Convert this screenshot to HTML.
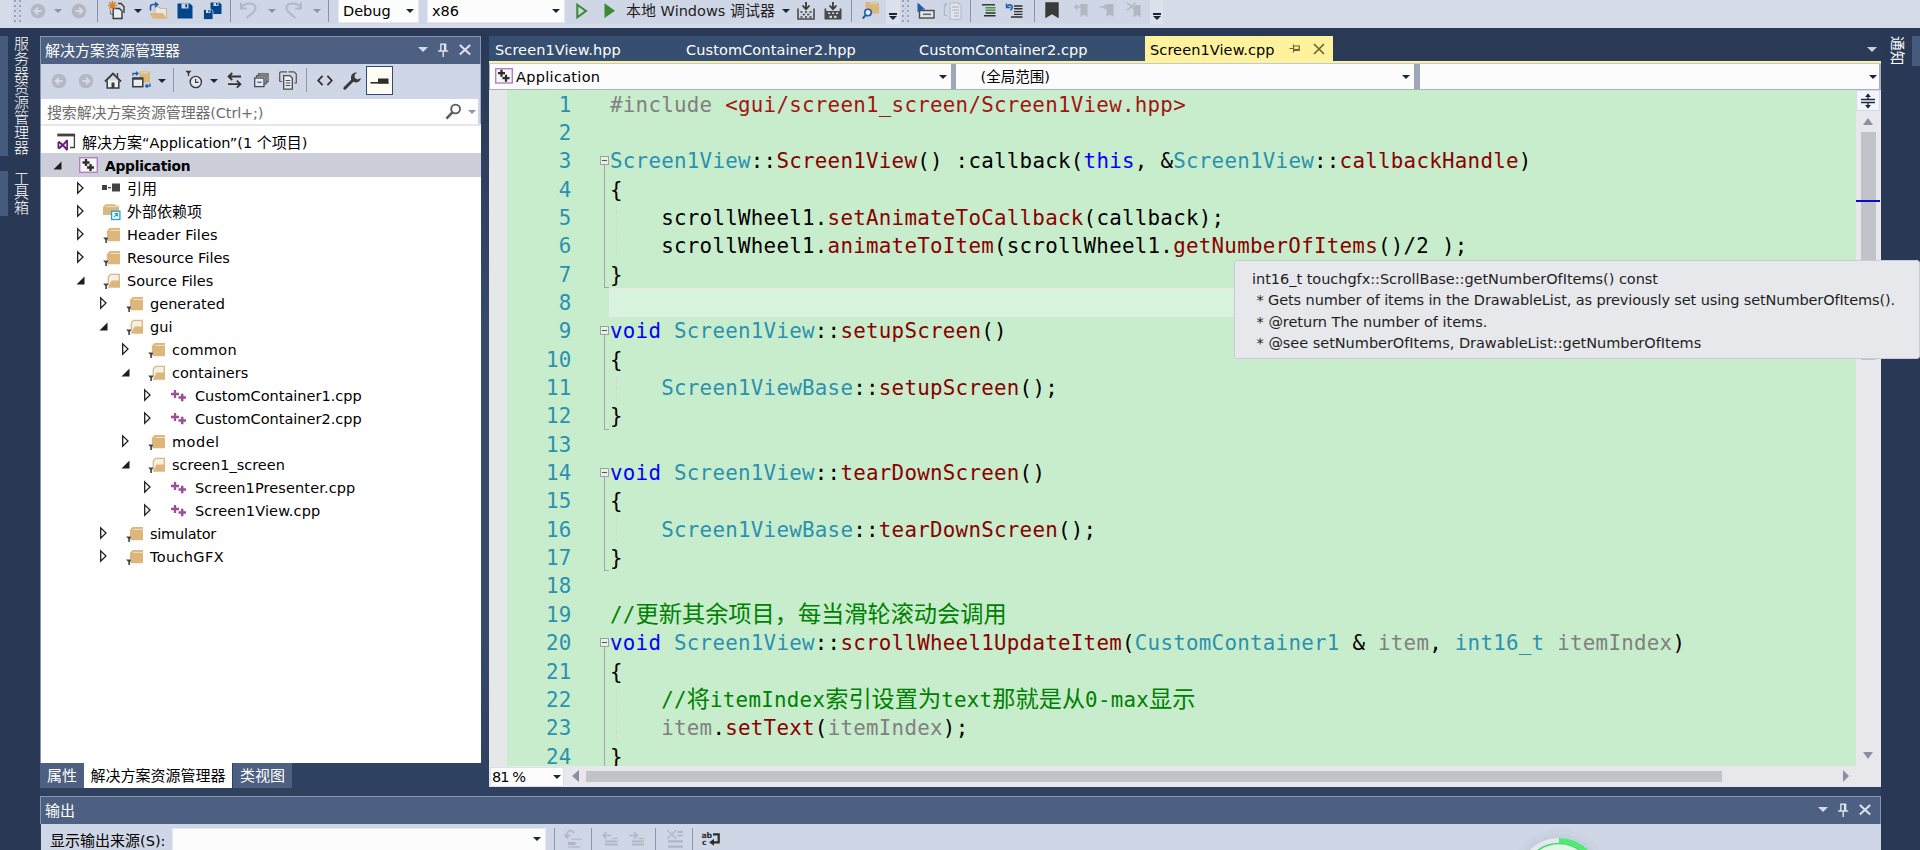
<!DOCTYPE html>
<html lang="zh-CN">
<head>
<meta charset="utf-8">
<title>Application - Microsoft Visual Studio</title>
<style>
html,body{margin:0;padding:0;}
body{width:1920px;height:850px;overflow:hidden;background:#293955;position:relative;
  font-family:"DejaVu Sans","Liberation Sans","Noto Sans CJK SC",sans-serif;font-size:14.5px;color:#000;}
.abs{position:absolute;}
div,span{box-sizing:border-box;}
svg{position:absolute;overflow:visible;}
/* ---------- top toolbar ---------- */
#topbar{left:0;top:0;width:1920px;height:28px;background:#d6dbe9;}
.grip{width:7px;height:22px;top:-0.3px;background-image:radial-gradient(circle at 1px 1px,#6b7690 0.45px,transparent 1px),radial-gradient(circle at 3.5px 3.5px,#a3abc0 0.45px,transparent 1px);background-size:5px 5px;}
.vsep{width:1px;background:#8a93a6;top:0;height:21.500px;}
.combo{background:#fcfcfc;border:1px solid #e5e9f2;height:24px;top:-1px;line-height:22px;padding-left:4px;}
.dd{width:0;height:0;border-left:4px solid transparent;border-right:4px solid transparent;border-top:4px solid #1b2438;}
.dd.g{border-top-color:#8d93a3;}
.dd.s{border-left-width:4px;border-right-width:4px;border-top-width:4.5px;}
/* ---------- side strips ---------- */
.sidebar{background:#465a7d;width:8px;left:0;}
.vtext{color:#fff;font-weight:300;font-size:15px;line-height:14.8px;width:15px;word-break:break-all;text-align:center;}
/* ---------- tool windows ---------- */
.twtitle{background:#4d6082;color:#fff;font-size:15px;line-height:29px;padding-left:4px;border:1px solid #8794b4;border-bottom:none;}
.twbar{background:#cfd6e5;}
/* ---------- tree ---------- */
#tree{left:41px;top:126px;width:440px;height:637px;background:#fff;}
.row{position:absolute;left:0;width:440px;height:23px;line-height:23px;white-space:nowrap;}
.row > span{position:absolute;top:2px;}
.row.sel{background:#ccceda;height:24px;}
.exp{position:absolute;width:0;height:0;}
/* ---------- editor ---------- */
#editor{left:489px;top:90px;width:1392px;height:676px;background:#c7edcc;overflow:hidden;}
.code{font-family:"DejaVu Sans Mono","Liberation Mono","Noto Sans CJK SC",monospace;font-size:20.8px;letter-spacing:0.278px;white-space:pre;}
.ln,.cl{position:absolute;height:28.35px;line-height:28.35px;margin-top:0.5px;}
.ln{left:0;width:82.5px;text-align:right;color:#2b91af;}
.cl{left:121px;}
.k{color:#0000ff}.t{color:#2b91af}.f{color:#880000}.s{color:#a31515}.p{color:#808080}.c{color:#008000}
.cj{line-height:0;font-size:23.2px;letter-spacing:0;font-family:"Noto Sans CJK SC",sans-serif;}

/* ---------- doc tabs / navbar ---------- */
.dtab{position:absolute;top:37px;height:25px;line-height:27px;letter-spacing:0.1px;color:#fff;white-space:nowrap;}
#navbar{left:489px;top:63px;width:1392px;height:27px;background:#a7afc1;border-top:1px solid #c0c8d8;}
.nav{position:absolute;top:0;height:24.500px;background:#fcfcfc;line-height:26px;white-space:nowrap;}
/* ---------- scrollbars ---------- */
.sb{background:#e8e8ec;}
.thumb{background:#c2c3c9;}
.tri{width:0;height:0;}
/* ---------- tooltip ---------- */
#tip{letter-spacing:-0.03px;left:1234px;top:260px;width:686px;height:99px;background:#e7e8ec;border:1px solid #c9cbd6;border-radius:3px;
 line-height:21.4px;color:#1e1e1e;padding:8px 0 0 17px;white-space:pre;}
/* ---------- bottom tabs ---------- */
.btab{position:absolute;top:763px;height:25px;line-height:26.500px;font-size:15px;color:#fff;background:#4d6082;text-align:center;white-space:nowrap;}
.btab.on{background:#fff;color:#000;}
.z{font-size:15px;}
</style>
</head>
<body>
<!--TOPBAR-->
<!-- main toolbar -->
<div id="topbar" class="abs">
<div class="abs" style="left:12px;top:0;width:874px;height:24px;background:#cfd6e5"></div>
<div class="abs" style="left:886px;top:0;width:14px;height:24px;background:#dce1ed"></div>
<div class="abs" style="left:900px;top:0;width:250px;height:24px;background:#cfd6e5"></div>
<div class="abs" style="left:1150px;top:0;width:13px;height:24px;background:#dce1ed"></div>
<div class="abs grip" style="left:14px"></div>
<svg style="left:30px;top:3px" width="16" height="16" viewBox="0 0 16 16"><circle cx="8" cy="8" r="7.3" fill="#b3b8c5"/><path d="M11.5 8H5M8 4.6L4.6 8L8 11.4" fill="none" stroke="#d4d9e5" stroke-width="1.8"/></svg>
<div class="abs dd g" style="left:54px;top:9px"></div>
<svg style="left:71px;top:3px" width="16" height="16" viewBox="0 0 16 16"><circle cx="8" cy="8" r="7.3" fill="#b3b8c5"/><path d="M4.5 8H11M8 4.6L11.4 8L8 11.4" fill="none" stroke="#d4d9e5" stroke-width="1.8"/></svg>
<div class="abs vsep" style="left:97px"></div>
<!-- new project -->
<svg style="left:108px;top:1px" width="18" height="19" viewBox="0 0 18 19"><path d="M10 2.5h3l3 3v6.5" fill="none" stroke="#3a3a3a" stroke-width="1.4"/><path d="M5 13.5H3.5Q2.5 13.5 2.5 12.5V9.5" fill="none" stroke="#3a3a3a" stroke-width="1.2" stroke-dasharray="1.5 1"/><path d="M5.2 7.5h6.2l2.6 2.6v7.4H5.2z" fill="#e8ecf4" stroke="#3a3a3a" stroke-width="1.4"/><path d="M4.5 0v9M0 4.5h9M1.3 1.3l6.4 6.4M7.7 1.3L1.3 7.7" stroke="#d9822b" stroke-width="1.5"/></svg>
<div class="abs dd" style="left:134px;top:9px"></div>
<!-- open -->
<svg style="left:148px;top:2px" width="20" height="18" viewBox="0 0 20 18"><path d="M7 5h4l1.5 1.5H18.5V16H7z" fill="#e4e8f1" stroke="#dcb67a" stroke-width="1.2"/><path d="M1.5 11H15l3.5 5.5H4.5z" fill="#dcb67a"/><path d="M2.5 8.5V5Q2.5 2.5 5 2.5H9.5M7 0.5l2.6 2L7 4.8" fill="none" stroke="#1c5fae" stroke-width="1.6"/></svg>
<!-- save -->
<svg style="left:177px;top:3px" width="16" height="16" viewBox="0 0 16 16"><path d="M0.5 0.5h12.5l2.5 2.5v12.5h-15z" fill="#00468c"/><rect x="4.5" y="0.5" width="7" height="5" fill="#cfd6e5"/><rect x="8.3" y="1.3" width="1.8" height="3" fill="#00468c"/></svg>
<!-- save all -->
<svg style="left:203px;top:2px" width="19" height="18" viewBox="0 0 19 18"><path d="M7.5 0.5h9l2 2v9.5h-11z" fill="#00468c"/><rect x="10.5" y="0.5" width="5" height="3.5" fill="#cfd6e5"/><rect x="13" y="1" width="1.4" height="2.2" fill="#00468c"/><path d="M0.5 7.5h8l1.5 1.5v8.500h-9.5z" fill="#00468c" stroke="#cfd6e5" stroke-width="0.8"/><rect x="3" y="7.8" width="4.5" height="3.2" fill="#cfd6e5"/><rect x="5.2" y="8.200" width="1.300" height="2" fill="#00468c"/></svg>
<div class="abs vsep" style="left:230px"></div>
<!-- undo / redo -->
<svg style="left:240px;top:1px" width="17" height="18" viewBox="0 0 17 18"><path d="M1 6.500C6 0.500 15.500 1.500 15.500 7C15.500 11 9 14.500 6.500 17" fill="none" stroke="#b2b7c4" stroke-width="2"/><path d="M1 1.500V7.500H7" fill="none" stroke="#b2b7c4" stroke-width="2"/></svg>
<div class="abs dd g" style="left:268px;top:9px"></div>
<svg style="left:285px;top:1px" width="17" height="18" viewBox="0 0 17 18"><path d="M16 6.500C11 0.500 1.500 1.500 1.500 7C1.500 11 8 14.500 10.500 17" fill="none" stroke="#b2b7c4" stroke-width="2"/><path d="M16 1.500V7.500H10" fill="none" stroke="#b2b7c4" stroke-width="2"/></svg>
<div class="abs dd g" style="left:313px;top:9px"></div>
<div class="abs vsep" style="left:328px"></div>
<!-- combos -->
<div class="abs combo" style="left:338px;width:81px">Debug</div>
<div class="abs dd s" style="left:405.500px;top:9px"></div>
<div class="abs combo" style="left:427px;width:138px">x86</div>
<div class="abs dd s" style="left:551.500px;top:9px"></div>
<!-- start buttons -->
<svg style="left:576px;top:3px" width="12" height="16" viewBox="0 0 12 16"><path d="M1.300 1.800L10 8L1.300 14.200z" fill="none" stroke="#388a34" stroke-width="2" stroke-linejoin="miter"/></svg>
<svg style="left:604px;top:3px" width="12" height="16" viewBox="0 0 12 16"><path d="M0.500 0.300L11 7.700L0.500 15z" fill="#388a34"/></svg>
<div class="abs" style="left:626px;top:1px;height:22px;line-height:21px;white-space:nowrap;color:#1e1e1e"><span class="z">本地</span> Windows <span class="z">调试器</span></div>
<div class="abs dd" style="left:781.500px;top:9px"></div>
<!-- process icons -->
<svg style="left:797px;top:2px" width="18" height="18" viewBox="0 0 18 18"><path d="M9 0v7M5.500 3.500L9 7.200L12.500 3.500" fill="none" stroke="#3a3a3a" stroke-width="1.800"/><path d="M1 6.500V17h16V6.500" fill="none" stroke="#4a4a4a" stroke-width="1.600"/><path d="M3.500 10h2M8 10h2M12.500 10h2M5.800 12.500h2M10.200 12.500h2M3.500 15h2M8 15h2M12.500 15h2" stroke="#3a3a3a" stroke-width="1.600"/></svg>
<svg style="left:824px;top:2px" width="18" height="18" viewBox="0 0 18 18"><path d="M9 0v7M5.500 3.500L9 7.200L12.500 3.500" fill="none" stroke="#3a3a3a" stroke-width="1.800"/><path d="M0.500 6.500V17.500h17V6.500h-1.800V9.500H2.300V6.500z" fill="#4a4a4a"/><rect x="2" y="9" width="14" height="8" fill="#4a4a4a"/><path d="M4 11.200h2.200M8 11.200h2.200M12 11.200h2.200" stroke="#cfd6e5" stroke-width="1.500"/><path d="M5.500 14.800h2.500M10 14.800h2.500" stroke="#cfd6e5" stroke-width="2.200"/></svg>
<div class="abs vsep" style="left:851px"></div>
<!-- find in files -->
<svg style="left:862px;top:1px" width="19" height="19" viewBox="0 0 19 19"><path d="M3.500 1h11.500l2 1.500v10H3.500z" fill="#dcb67a"/><path d="M8 2.300h7" stroke="#c7e3c0" stroke-width="1.200"/><circle cx="6" cy="11.500" r="3.300" fill="#e8ecf4" stroke="#1c5fae" stroke-width="1.600"/><path d="M3.800 13.800L0.800 17.500" stroke="#1c5fae" stroke-width="2"/></svg>
<div class="abs" style="left:889px;top:13px;width:8px;height:1.500px;background:#1b2438"></div>
<div class="abs dd" style="left:889px;top:16px"></div>
<!-- second toolbar -->
<div class="abs grip" style="left:902px"></div>
<svg style="left:917px;top:2px" width="18" height="17" viewBox="0 0 18 17"><path d="M0.500 0.500V10.500L3.200 8L5 12L6.800 11.200L5 7.500H8.500z" fill="#1c5fae"/><rect x="2.500" y="8.500" width="14.500" height="7.500" fill="#dfe4ee" stroke="#4a4a4a" stroke-width="1.400"/><path d="M6 12.300h8" stroke="#6a6a6a" stroke-width="1.600"/></svg>
<svg style="left:943px;top:2px" width="19" height="18" viewBox="0 0 19 18"><path d="M4.500 2.500H1.500V13.500H4.500M3 0.500v4" fill="none" stroke="#b2b7c4" stroke-width="1.200"/><path d="M7 0.800h8l3 3v13.500H7z" fill="#dfe4ee" stroke="#b9bfcc" stroke-width="1.200"/><path d="M9 5h7M9 8h7M11 11h5M11 14h5" stroke="#b9bfcc" stroke-width="1.300"/></svg>
<div class="abs vsep" style="left:970px"></div>
<svg style="left:982px;top:4px" width="14" height="13" viewBox="0 0 14 13"><path d="M0 0.800h13" stroke="#2d2d2d" stroke-width="1.400"/><path d="M3.500 3.800h10M3.500 6.300h10" stroke="#3a9a36" stroke-width="1.500"/><path d="M3.500 9h10M2 11.800h11.500" stroke="#2d2d2d" stroke-width="1.400"/></svg>
<svg style="left:1006px;top:3px" width="17" height="15" viewBox="0 0 17 15"><path d="M1 3.500Q3.500 0.800 5.800 2.800Q7.200 4.500 4.500 7.500" fill="none" stroke="#1c5fae" stroke-width="1.600"/><path d="M0.500 0.500V4.500H4.500" fill="none" stroke="#1c5fae" stroke-width="1.400"/><path d="M8 3h8.500M8 5.800h8.500M8 8.600h8.500M8 11.400h8.500M5 14h11.500" stroke="#2d2d2d" stroke-width="1.400"/></svg>
<div class="abs vsep" style="left:1034px"></div>
<svg style="left:1045px;top:2px" width="14" height="17" viewBox="0 0 14 17"><path d="M0.300 0.300H13.700V16.300L7 12.300L0.300 16.300z" fill="#3a3a3a"/></svg>
<svg style="left:1074px;top:3px" width="15" height="15" viewBox="0 0 15 15"><path d="M6.500 1H13.500V14L10 11.500L6.500 14z" fill="#b2b7c4"/><path d="M8 4H1M3.500 1.500L1 4L3.500 6.500" fill="none" stroke="#b2b7c4" stroke-width="1.500"/></svg>
<svg style="left:1099px;top:3px" width="16" height="15" viewBox="0 0 16 15"><path d="M7.500 1H14.500V14L11 11.500L7.500 14z" fill="#b2b7c4"/><path d="M0.500 4H8M5.500 1.500L8 4L5.500 6.500" fill="none" stroke="#b2b7c4" stroke-width="1.500"/></svg>
<svg style="left:1126px;top:2px" width="16" height="16" viewBox="0 0 16 16"><path d="M7.500 3H14.500V15.500L11 13L7.500 15.500z" fill="#b2b7c4"/><path d="M1 0.500L9.500 8.500M9.500 0.500L1 8.500" fill="none" stroke="#b2b7c4" stroke-width="1.400"/></svg>
<div class="abs" style="left:1153px;top:13px;width:8px;height:1.500px;background:#1b2438"></div>
<div class="abs dd" style="left:1153px;top:16px"></div>
</div>
<!--/TOPBAR-->
<!-- dock area background (vertical gradient) -->
<div class="abs" style="left:40px;top:28px;width:1841px;height:822px;background:linear-gradient(#293955 0,#35496a 302px,#35496a 605px,#293955 907px)"></div>
<!--LEFTSTRIP-->
<!-- auto-hide strips (left) -->
<div class="abs sidebar" style="top:36px;height:120px"></div>
<div class="abs vtext" style="left:14px;top:37px">服务器资源管理器</div>
<div class="abs sidebar" style="top:171px;height:45px"></div>
<div class="abs vtext" style="left:14px;top:171.500px">工具箱</div>
<!--/LEFTSTRIP-->
<!--SOLEXP-->
<!-- Solution Explorer tool window -->
<div class="abs twtitle" style="left:40px;top:36px;width:441px;height:28px"><span class="z">解决方案资源管理器</span></div>
<div class="abs dd" style="left:418px;top:47px;border-top-color:#d3d9e6;border-left-width:5px;border-right-width:5px;border-top-width:5px"></div>
<svg style="left:437px;top:43px" width="12" height="14" viewBox="0 0 12 14"><path d="M3.200 1.200h6M3.800 1.200v6.800M1.200 8h10M6.200 8.500v5.500" fill="none" stroke="#e0e4ec" stroke-width="1.4"/><path d="M8.100 1.200v6.800" stroke="#e0e4ec" stroke-width="2.400"/></svg>
<svg style="left:459px;top:44px" width="12" height="11" viewBox="0 0 12 11"><path d="M0.800 1L11.200 10.500M11.200 1L0.800 10.500" fill="none" stroke="#e0e4ec" stroke-width="2"/></svg>
<div class="abs twbar" style="left:41px;top:64px;width:440px;height:62px"></div>
<!-- toolbar icons -->
<svg style="left:51px;top:73px" width="16" height="16" viewBox="0 0 16 16"><circle cx="8" cy="8" r="7.3" fill="#b3b8c5"/><path d="M11.5 8H5M8 4.6L4.6 8L8 11.4" fill="none" stroke="#d4d9e5" stroke-width="1.8"/></svg>
<svg style="left:78px;top:73px" width="16" height="16" viewBox="0 0 16 16"><circle cx="8" cy="8" r="7.3" fill="#b3b8c5"/><path d="M4.5 8H11M8 4.6L11.4 8L8 11.4" fill="none" stroke="#d4d9e5" stroke-width="1.8"/></svg>
<svg style="left:104px;top:72px" width="18" height="17" viewBox="0 0 18 17"><path d="M1 9.5L9 1.5L17 9.5" fill="none" stroke="#3a3a3a" stroke-width="1.8"/><path d="M3.2 8.5V16h11.6V8.5" fill="#f0f0f0" stroke="#3a3a3a" stroke-width="1.5"/><rect x="7.5" y="10.5" width="3" height="5.5" fill="#3a3a3a"/><path d="M13.5 1v4" stroke="#3a3a3a" stroke-width="1.4"/></svg>
<svg style="left:132px;top:71px" width="19" height="18" viewBox="0 0 19 18"><path d="M7.5 0.5h10.5v11H7.5z" fill="#dcb67a"/><path d="M9 1.8h7" stroke="#efdcb8" stroke-width="1"/><rect x="0.8" y="7.2" width="10" height="8.5" fill="#e8ecf4" stroke="#3a3a3a" stroke-width="1.5"/><rect x="0.8" y="6.5" width="10" height="2.2" fill="#3a3a3a"/><path d="M1 4.5V2.5h4.5M4 0.6L6 2.5L4 4.4" fill="none" stroke="#1c5fae" stroke-width="1.3"/><path d="M18 12.5v2.5h-4M15.5 13.1L13.6 15l1.9 1.9" fill="none" stroke="#1c5fae" stroke-width="1.3"/></svg>
<div class="abs dd" style="left:158px;top:79px"></div>
<div class="abs" style="left:173px;top:68px;width:1px;height:24px;background:#8e99ae"></div>
<svg style="left:185px;top:70px" width="18" height="19" viewBox="0 0 18 19"><path d="M0.5 0.8h6l-2.3 2.7v2.6h-1.4V3.5z" fill="#3a3a3a"/><circle cx="10.8" cy="12" r="5.6" fill="#e4e8f1" stroke="#3a3a3a" stroke-width="1.4"/><path d="M10.6 8.8v3.6h3" fill="none" stroke="#3a3a3a" stroke-width="1.2"/></svg>
<div class="abs dd" style="left:210px;top:79px"></div>
<svg style="left:227px;top:72px" width="15" height="17" viewBox="0 0 15 17"><path d="M14 4.5H2M5.2 1L1.6 4.5L5.2 8" fill="none" stroke="#333" stroke-width="1.8"/><path d="M1 12.2h12M9.8 8.7l3.6 3.5L9.8 15.7" fill="none" stroke="#333" stroke-width="1.8"/></svg>
<svg style="left:254px;top:73px" width="15" height="15" viewBox="0 0 15 15"><path d="M4.5 2.5V0.8H14v8h-1.8" fill="none" stroke="#4a4a4a" stroke-width="1.2"/><path d="M2.5 4.5V2.8H12v8h-1.8" fill="none" stroke="#4a4a4a" stroke-width="1.2"/><rect x="0.7" y="5" width="9.3" height="8.6" fill="#e8ecf4" stroke="#4a4a4a" stroke-width="1.3"/><path d="M3.2 9.3h4.4" stroke="#3b7fc9" stroke-width="1.5"/></svg>
<svg style="left:279px;top:71px" width="18" height="19" viewBox="0 0 18 19"><path d="M3 10.5H1.2Q0.7 10.5 0.7 10V2Q0.7 0.8 2 0.8h6" fill="none" stroke="#555" stroke-width="1.2"/><path d="M9.5 0.8H15l2.3 2.3V12h-2" fill="none" stroke="#555" stroke-width="1.2"/><path d="M4.7 4.6h6.2l2.4 2.4v11.2H4.7z" fill="#e8ecf4" stroke="#4a4a4a" stroke-width="1.3"/><path d="M6.7 9.5h4.6M6.7 12h4.6M6.7 14.5h4.6" stroke="#4a4a4a" stroke-width="1.1"/></svg>
<div class="abs" style="left:306px;top:68px;width:1px;height:24px;background:#8e99ae"></div>
<svg style="left:317px;top:75px" width="16" height="11" viewBox="0 0 16 11"><path d="M5.6 0.8L1.2 5.5L5.6 10.2M10.4 0.8L14.8 5.5L10.4 10.2" fill="none" stroke="#2d2d2d" stroke-width="1.7"/></svg>
<svg style="left:343px;top:72px" width="19" height="18" viewBox="0 0 19 18"><path d="M1.8 16.2L10 8" stroke="#3a3a3a" stroke-width="3" stroke-linecap="round"/><path d="M14.2 0.6A5 5 0 1 0 17.9 6L14.5 7.5L11.6 5.8L11.8 2.4z" fill="#3a3a3a"/></svg>
<div class="abs" style="left:366px;top:66px;width:27px;height:29px;background:#fffcf4;border:1px solid #2f4a80"></div>
<svg style="left:370px;top:78px" width="19" height="7" viewBox="0 0 19 7"><rect x="8" y="0.5" width="10.5" height="5" fill="#2d2d2d"/><rect x="0.5" y="4" width="18" height="1.6" fill="#2d2d2d"/></svg>
<div class="abs" style="left:40px;top:64px;width:1px;height:699px;background:#8793b0"></div>
<div class="abs" style="left:480px;top:64px;width:1px;height:699px;background:#a5afc8"></div>
<!-- search box -->
<div class="abs" style="left:41px;top:124px;width:440px;height:2px;background:#e4e7ef"></div>
<div class="abs" style="left:41px;top:99px;width:437px;height:25px;background:#fefefe;color:#6d6d6d;line-height:28px;padding-left:6px;letter-spacing:-0.15px;white-space:nowrap"><span class="z">搜索解决方案资源管理器</span>(Ctrl+;)</div>
<svg style="left:445px;top:103px" width="17" height="17" viewBox="0 0 17 17"><circle cx="10.6" cy="6" r="4.4" fill="none" stroke="#5a5a5a" stroke-width="1.9"/><path d="M7.4 9.4L1.4 15.6" stroke="#5a5a5a" stroke-width="2.6"/></svg>
<div class="abs dd g s" style="left:468px;top:110px"></div>
<div id="tree" class="abs">
<div class="row" style="top:4px"><svg style="left:16px;top:3px" width="19" height="19" viewBox="0 0 19 19"><path d="M17.400 1.500V14.500h-4.400" fill="none" stroke="#424242" stroke-width="1.300"/><rect x="0.300" y="0.600" width="17.800" height="2.800" fill="#424242"/><path d="M0.500 9l2-1 3.300 2.800L9.500 6.500l1.500 0.800v9.600l-1.500 0.800-3.700-4.300-3.300 2.800-2-1zM2.300 10.500v3.200l1.900-1.600zM9.300 10l-2.300 2.100 2.300 2.100z" fill="#68217a" fill-rule="evenodd"/></svg><span style="left:41px"><span class="z">解决方案</span>“Application”(1 <span class="z">个项目</span>)</span></div>
<div class="row sel" style="top:27px"><svg style="left:12px;top:8px" width="9" height="9" viewBox="0 0 9 9"><path d="M8.5 0.5V8.5H0.5z" fill="#1e1e1e"/></svg><svg style="left:38px;top:4px" width="19" height="16" viewBox="0 0 19 16"><rect x="0.700" y="0.700" width="17.600" height="14.600" fill="#f6f6f6" stroke="#b77fc0" stroke-width="1.400"/><path d="M3.500 5.500h7M7 2v7M8 10.500h7M11.500 7v7" stroke="#2d2d2d" stroke-width="2.300" fill="none"/></svg><span style="left:64px;font-weight:bold;font-size:13.8px;letter-spacing:-0.25px">Application</span></div>
<div class="row" style="top:50px"><svg style="left:36px;top:6px" width="7" height="12" viewBox="0 0 7 12"><path d="M0.7 0.9L6 6L0.7 11.1z" fill="#fff" stroke="#1e1e1e" stroke-width="1.3" stroke-linejoin="miter"/></svg><svg style="left:61px;top:7px" width="18" height="9" viewBox="0 0 18 9"><rect x="0" y="2" width="5" height="5" fill="#424242"/><rect x="6" y="4" width="3" height="1.3" fill="#424242"/><rect x="10" y="0.5" width="8" height="8" fill="#424242"/></svg><span style="left:86px"><span class="z">引用</span></span></div>
<div class="row" style="top:73px"><svg style="left:36px;top:6px" width="7" height="12" viewBox="0 0 7 12"><path d="M0.7 0.9L6 6L0.7 11.1z" fill="#fff" stroke="#1e1e1e" stroke-width="1.3" stroke-linejoin="miter"/></svg><svg style="left:61px;top:3px" width="19" height="19" viewBox="0 0 19 19"><path d="M1 5L3.500 2.300h9.500l1 1.300H17v9.400H1z" fill="#dcb67a"/><path d="M4 4.600h13" stroke="#f0dfbe" stroke-width="1"/><rect x="9.600" y="9.200" width="8.300" height="8.300" fill="#fff" stroke="#1ba1e2" stroke-width="1.300"/><path d="M12 15.200l3.300-3.300M12.500 11.600h3v3" stroke="#1ba1e2" stroke-width="1.200" fill="none"/></svg><span style="left:86px"><span class="z">外部依赖项</span></span></div>
<div class="row" style="top:96px"><svg style="left:36px;top:6px" width="7" height="12" viewBox="0 0 7 12"><path d="M0.7 0.9L6 6L0.7 11.1z" fill="#fff" stroke="#1e1e1e" stroke-width="1.3" stroke-linejoin="miter"/></svg><svg style="left:61px;top:4px" width="18" height="18" viewBox="0 0 18 18"><path d="M4.9 5L7.6 2H18V15.3H4.9z" fill="#dcb67a"/><path d="M8.2 4.4H18" stroke="#f0dfbe" stroke-width="1.1"/><path d="M1.2 11.5h5.8l-2.1 2.4v3h-1.6v-3z" fill="#424242" stroke="#fff" stroke-width="0.9" paint-order="stroke"/></svg><span style="left:86px;letter-spacing:0.12px">Header Files</span></div>
<div class="row" style="top:119px"><svg style="left:36px;top:6px" width="7" height="12" viewBox="0 0 7 12"><path d="M0.7 0.9L6 6L0.7 11.1z" fill="#fff" stroke="#1e1e1e" stroke-width="1.3" stroke-linejoin="miter"/></svg><svg style="left:61px;top:4px" width="18" height="18" viewBox="0 0 18 18"><path d="M4.9 5L7.6 2H18V15.3H4.9z" fill="#dcb67a"/><path d="M8.2 4.4H18" stroke="#f0dfbe" stroke-width="1.1"/><path d="M1.2 11.5h5.8l-2.1 2.4v3h-1.6v-3z" fill="#424242" stroke="#fff" stroke-width="0.9" paint-order="stroke"/></svg><span style="left:86px">Resource Files</span></div>
<div class="row" style="top:142px"><svg style="left:35px;top:8px" width="9" height="9" viewBox="0 0 9 9"><path d="M8.5 0.5V8.5H0.5z" fill="#1e1e1e"/></svg><svg style="left:61px;top:4px" width="18" height="18" viewBox="0 0 18 18"><path d="M6.3 13V5L8.6 2.4H17.3V9" fill="#f4efe6" stroke="#dcb67a" stroke-width="1.3"/><path d="M9.6 8.6H18V15.8H5.6z" fill="#dcb67a"/><path d="M1.2 11.5h5.8l-2.1 2.4v3h-1.6v-3z" fill="#424242" stroke="#fff" stroke-width="0.9" paint-order="stroke"/></svg><span style="left:86px">Source Files</span></div>
<div class="row" style="top:165px"><svg style="left:59px;top:6px" width="7" height="12" viewBox="0 0 7 12"><path d="M0.7 0.9L6 6L0.7 11.1z" fill="#fff" stroke="#1e1e1e" stroke-width="1.3" stroke-linejoin="miter"/></svg><svg style="left:84px;top:4px" width="18" height="18" viewBox="0 0 18 18"><path d="M4.9 5L7.6 2H18V15.3H4.9z" fill="#dcb67a"/><path d="M8.2 4.4H18" stroke="#f0dfbe" stroke-width="1.1"/><path d="M1.2 11.5h5.8l-2.1 2.4v3h-1.6v-3z" fill="#424242" stroke="#fff" stroke-width="0.9" paint-order="stroke"/></svg><span style="left:109px">generated</span></div>
<div class="row" style="top:188px"><svg style="left:58px;top:8px" width="9" height="9" viewBox="0 0 9 9"><path d="M8.5 0.5V8.5H0.5z" fill="#1e1e1e"/></svg><svg style="left:84px;top:4px" width="18" height="18" viewBox="0 0 18 18"><path d="M6.3 13V5L8.6 2.4H17.3V9" fill="#f4efe6" stroke="#dcb67a" stroke-width="1.3"/><path d="M9.6 8.6H18V15.8H5.6z" fill="#dcb67a"/><path d="M1.2 11.5h5.8l-2.1 2.4v3h-1.6v-3z" fill="#424242" stroke="#fff" stroke-width="0.9" paint-order="stroke"/></svg><span style="left:109px">gui</span></div>
<div class="row" style="top:211px"><svg style="left:81px;top:6px" width="7" height="12" viewBox="0 0 7 12"><path d="M0.7 0.9L6 6L0.7 11.1z" fill="#fff" stroke="#1e1e1e" stroke-width="1.3" stroke-linejoin="miter"/></svg><svg style="left:106px;top:4px" width="18" height="18" viewBox="0 0 18 18"><path d="M4.9 5L7.6 2H18V15.3H4.9z" fill="#dcb67a"/><path d="M8.2 4.4H18" stroke="#f0dfbe" stroke-width="1.1"/><path d="M1.2 11.5h5.8l-2.1 2.4v3h-1.6v-3z" fill="#424242" stroke="#fff" stroke-width="0.9" paint-order="stroke"/></svg><span style="left:131px;letter-spacing:0.3px">common</span></div>
<div class="row" style="top:234px"><svg style="left:80px;top:8px" width="9" height="9" viewBox="0 0 9 9"><path d="M8.5 0.5V8.5H0.5z" fill="#1e1e1e"/></svg><svg style="left:106px;top:4px" width="18" height="18" viewBox="0 0 18 18"><path d="M6.3 13V5L8.6 2.4H17.3V9" fill="#f4efe6" stroke="#dcb67a" stroke-width="1.3"/><path d="M9.6 8.6H18V15.8H5.6z" fill="#dcb67a"/><path d="M1.2 11.5h5.8l-2.1 2.4v3h-1.6v-3z" fill="#424242" stroke="#fff" stroke-width="0.9" paint-order="stroke"/></svg><span style="left:131px">containers</span></div>
<div class="row" style="top:257px"><svg style="left:103px;top:6px" width="7" height="12" viewBox="0 0 7 12"><path d="M0.7 0.9L6 6L0.7 11.1z" fill="#fff" stroke="#1e1e1e" stroke-width="1.3" stroke-linejoin="miter"/></svg><svg style="left:130px;top:7px" width="16" height="12" viewBox="0 0 16 12"><path d="M0 4h8M4 0v8" stroke="#9b4f96" stroke-width="2.3" fill="none"/><path d="M7.5 7.5h7.5M11.2 3.8v7.5" stroke="#9b4f96" stroke-width="2.5" fill="none"/></svg><span style="left:154px">CustomContainer1.cpp</span></div>
<div class="row" style="top:280px"><svg style="left:103px;top:6px" width="7" height="12" viewBox="0 0 7 12"><path d="M0.7 0.9L6 6L0.7 11.1z" fill="#fff" stroke="#1e1e1e" stroke-width="1.3" stroke-linejoin="miter"/></svg><svg style="left:130px;top:7px" width="16" height="12" viewBox="0 0 16 12"><path d="M0 4h8M4 0v8" stroke="#9b4f96" stroke-width="2.3" fill="none"/><path d="M7.5 7.5h7.5M11.2 3.8v7.5" stroke="#9b4f96" stroke-width="2.5" fill="none"/></svg><span style="left:154px">CustomContainer2.cpp</span></div>
<div class="row" style="top:303px"><svg style="left:81px;top:6px" width="7" height="12" viewBox="0 0 7 12"><path d="M0.7 0.9L6 6L0.7 11.1z" fill="#fff" stroke="#1e1e1e" stroke-width="1.3" stroke-linejoin="miter"/></svg><svg style="left:106px;top:4px" width="18" height="18" viewBox="0 0 18 18"><path d="M4.9 5L7.6 2H18V15.3H4.9z" fill="#dcb67a"/><path d="M8.2 4.4H18" stroke="#f0dfbe" stroke-width="1.1"/><path d="M1.2 11.5h5.8l-2.1 2.4v3h-1.6v-3z" fill="#424242" stroke="#fff" stroke-width="0.9" paint-order="stroke"/></svg><span style="left:131px;letter-spacing:0.5px">model</span></div>
<div class="row" style="top:326px"><svg style="left:80px;top:8px" width="9" height="9" viewBox="0 0 9 9"><path d="M8.5 0.5V8.5H0.5z" fill="#1e1e1e"/></svg><svg style="left:106px;top:4px" width="18" height="18" viewBox="0 0 18 18"><path d="M6.3 13V5L8.6 2.4H17.3V9" fill="#f4efe6" stroke="#dcb67a" stroke-width="1.3"/><path d="M9.6 8.6H18V15.8H5.6z" fill="#dcb67a"/><path d="M1.2 11.5h5.8l-2.1 2.4v3h-1.6v-3z" fill="#424242" stroke="#fff" stroke-width="0.9" paint-order="stroke"/></svg><span style="left:131px">screen1_screen</span></div>
<div class="row" style="top:349px"><svg style="left:103px;top:6px" width="7" height="12" viewBox="0 0 7 12"><path d="M0.7 0.9L6 6L0.7 11.1z" fill="#fff" stroke="#1e1e1e" stroke-width="1.3" stroke-linejoin="miter"/></svg><svg style="left:130px;top:7px" width="16" height="12" viewBox="0 0 16 12"><path d="M0 4h8M4 0v8" stroke="#9b4f96" stroke-width="2.3" fill="none"/><path d="M7.5 7.5h7.5M11.2 3.8v7.5" stroke="#9b4f96" stroke-width="2.5" fill="none"/></svg><span style="left:154px;letter-spacing:0.12px">Screen1Presenter.cpp</span></div>
<div class="row" style="top:372px"><svg style="left:103px;top:6px" width="7" height="12" viewBox="0 0 7 12"><path d="M0.7 0.9L6 6L0.7 11.1z" fill="#fff" stroke="#1e1e1e" stroke-width="1.3" stroke-linejoin="miter"/></svg><svg style="left:130px;top:7px" width="16" height="12" viewBox="0 0 16 12"><path d="M0 4h8M4 0v8" stroke="#9b4f96" stroke-width="2.3" fill="none"/><path d="M7.5 7.5h7.5M11.2 3.8v7.5" stroke="#9b4f96" stroke-width="2.5" fill="none"/></svg><span style="left:154px;letter-spacing:0.15px">Screen1View.cpp</span></div>
<div class="row" style="top:395px"><svg style="left:59px;top:6px" width="7" height="12" viewBox="0 0 7 12"><path d="M0.7 0.9L6 6L0.7 11.1z" fill="#fff" stroke="#1e1e1e" stroke-width="1.3" stroke-linejoin="miter"/></svg><svg style="left:84px;top:4px" width="18" height="18" viewBox="0 0 18 18"><path d="M4.9 5L7.6 2H18V15.3H4.9z" fill="#dcb67a"/><path d="M8.2 4.4H18" stroke="#f0dfbe" stroke-width="1.1"/><path d="M1.2 11.5h5.8l-2.1 2.4v3h-1.6v-3z" fill="#424242" stroke="#fff" stroke-width="0.9" paint-order="stroke"/></svg><span style="left:109px;letter-spacing:-0.25px">simulator</span></div>
<div class="row" style="top:418px"><svg style="left:59px;top:6px" width="7" height="12" viewBox="0 0 7 12"><path d="M0.7 0.9L6 6L0.7 11.1z" fill="#fff" stroke="#1e1e1e" stroke-width="1.3" stroke-linejoin="miter"/></svg><svg style="left:84px;top:4px" width="18" height="18" viewBox="0 0 18 18"><path d="M4.9 5L7.6 2H18V15.3H4.9z" fill="#dcb67a"/><path d="M8.2 4.4H18" stroke="#f0dfbe" stroke-width="1.1"/><path d="M1.2 11.5h5.8l-2.1 2.4v3h-1.6v-3z" fill="#424242" stroke="#fff" stroke-width="0.9" paint-order="stroke"/></svg><span style="left:109px;letter-spacing:0.35px">TouchGFX</span></div>
</div>
<!-- bottom tool-window tabs -->
<div class="btab" style="left:40px;width:44px"><span class="z">属性</span></div>
<div class="btab on" style="left:84px;width:148px"><span class="z">解决方案资源管理器</span></div>
<div class="btab" style="left:233px;width:59px"><span class="z">类视图</span></div>
<!--/SOLEXP-->
<!--EDITOR-->
<!-- document tab strip -->
<div class="abs" style="left:489px;top:36px;width:656px;height:25px;background:#364e6f"></div>
<div class="dtab" style="left:495px">Screen1View.hpp</div>
<div class="dtab" style="left:686px">CustomContainer2.hpp</div>
<div class="dtab" style="left:919px">CustomContainer2.cpp</div>
<div class="abs" style="left:1145px;top:36px;width:188px;height:26px;background:#fff29d"></div>
<div class="dtab" style="left:1150px;color:#000">Screen1View.cpp</div>
<svg style="left:1289px;top:43px" width="12" height="12" viewBox="0 0 12 12"><path d="M0.5 5.500H4.5M4.5 1.500V9.500M4.5 3H10.300V7.500H4.5" fill="none" stroke="#6f6534" stroke-width="1.2"/><path d="M4.5 6.800H10.300" stroke="#6f6534" stroke-width="1.800"/></svg>
<svg style="left:1313px;top:43px" width="12" height="12" viewBox="0 0 12 12"><path d="M1 1L11 11M11 1L1 11" fill="none" stroke="#6f6534" stroke-width="1.7"/></svg>
<div class="abs dd" style="left:1867px;top:47px;border-top-color:#c9cfdc;border-left-width:5px;border-right-width:5px;border-top-width:5px"></div>
<div class="abs" style="left:489px;top:61px;width:1392px;height:2px;background:#fff29d"></div>
<!-- navigation bar -->
<div id="navbar" class="abs">
 <div class="nav" style="left:1px;width:461px"><span style="position:absolute;left:26px;letter-spacing:0.3px">Application</span>
  <svg style="left:5px;top:4px" width="18" height="16" viewBox="0 0 18 16"><rect x="0.7" y="0.7" width="16.6" height="14.300" fill="#f5f5f5" stroke="#b77fc0" stroke-width="1.4"/><path d="M3 5.200h7M6.500 1.700v7M7.500 10.200h7M11 6.700v7" stroke="#2d2d2d" stroke-width="2.300" fill="none"/></svg>
  <div class="abs dd" style="left:449px;top:11px"></div></div>
 <div class="abs" style="left:462px;top:0;width:4.500px;height:25px;background:#9ea7b9"></div>
 <div class="nav" style="left:466.500px;width:458.500px"><span style="position:absolute;left:25px">(全局范围)</span>
  <div class="abs dd" style="left:446px;top:11px"></div></div>
 <div class="abs" style="left:925px;top:0;width:5.500px;height:25px;background:#9ea7b9"></div>
 <div class="nav" style="left:930.500px;width:459px"><div class="abs dd" style="left:449px;top:11px"></div></div>
</div>

<div id="editor" class="abs code">
<div class="abs" style="left:0;top:0;width:18px;height:676px;background:#e6e7e8"></div>
<div class="abs" id="curline" style="left:120px;top:198.45px;width:1247px;height:28.4px;background:#d7f3db;border:2px solid #e3ece6;border-right:none"></div>
<div class="abs" style="left:115px;top:75px;width:1px;height:122px;background:#a5a5a5"></div><div class="abs" style="left:115px;top:197px;width:5px;height:1px;background:#a5a5a5"></div><div class="abs" style="left:111px;top:66px;width:9px;height:9px;background:#e4f2e6;border:1px solid #a0a0a0"></div><div class="abs" style="left:113px;top:70px;width:5px;height:1px;background:#555"></div>
<div class="abs" style="left:115px;top:245px;width:1px;height:94px;background:#a5a5a5"></div><div class="abs" style="left:115px;top:339px;width:5px;height:1px;background:#a5a5a5"></div><div class="abs" style="left:111px;top:236px;width:9px;height:9px;background:#e4f2e6;border:1px solid #a0a0a0"></div><div class="abs" style="left:113px;top:240px;width:5px;height:1px;background:#555"></div>
<div class="abs" style="left:115px;top:387px;width:1px;height:93px;background:#a5a5a5"></div><div class="abs" style="left:115px;top:480px;width:5px;height:1px;background:#a5a5a5"></div><div class="abs" style="left:111px;top:378px;width:9px;height:9px;background:#e4f2e6;border:1px solid #a0a0a0"></div><div class="abs" style="left:113px;top:382px;width:5px;height:1px;background:#555"></div>
<div class="abs" style="left:115px;top:557px;width:1px;height:150px;background:#a5a5a5"></div><div class="abs" style="left:115px;top:707px;width:5px;height:1px;background:#a5a5a5"></div><div class="abs" style="left:111px;top:548px;width:9px;height:9px;background:#e4f2e6;border:1px solid #a0a0a0"></div><div class="abs" style="left:113px;top:552px;width:5px;height:1px;background:#555"></div>
<div class="abs" style="left:127px;top:115.4px;width:0;height:51.7px;border-left:1px dashed #d9cfe0"></div>
<div class="abs" style="left:127px;top:285.5px;width:0;height:23.4px;border-left:1px dashed #d9cfe0"></div>
<div class="abs" style="left:127px;top:427.2px;width:0;height:23.4px;border-left:1px dashed #d9cfe0"></div>
<div class="abs" style="left:127px;top:597.4px;width:0;height:51.7px;border-left:1px dashed #d9cfe0"></div>
<div class="ln" style="top:0.00px">1</div>
<div class="cl" style="top:0.00px"><span class="p">#include</span> <span class="s">&lt;gui/screen1_screen/Screen1View.hpp&gt;</span></div>
<div class="ln" style="top:28.35px">2</div>
<div class="ln" style="top:56.70px">3</div>
<div class="cl" style="top:56.70px"><span class="t">Screen1View</span>::<span class="f">Screen1View</span>() :callback(<span class="k">this</span>, &amp;<span class="t">Screen1View</span>::<span class="f">callbackHandle</span>)</div>
<div class="ln" style="top:85.05px">4</div>
<div class="cl" style="top:85.05px">{</div>
<div class="ln" style="top:113.40px">5</div>
<div class="cl" style="top:113.40px">    scrollWheel1.<span class="f">setAnimateToCallback</span>(callback);</div>
<div class="ln" style="top:141.75px">6</div>
<div class="cl" style="top:141.75px">    scrollWheel1.<span class="f">animateToItem</span>(scrollWheel1.<span class="f">getNumberOfItems</span>()/2 );</div>
<div class="ln" style="top:170.10px">7</div>
<div class="cl" style="top:170.10px">}</div>
<div class="ln" style="top:198.45px">8</div>
<div class="ln" style="top:226.80px">9</div>
<div class="cl" style="top:226.80px"><span class="k">void</span> <span class="t">Screen1View</span>::<span class="f">setupScreen</span>()</div>
<div class="ln" style="top:255.15px">10</div>
<div class="cl" style="top:255.15px">{</div>
<div class="ln" style="top:283.50px">11</div>
<div class="cl" style="top:283.50px">    <span class="t">Screen1ViewBase</span>::<span class="f">setupScreen</span>();</div>
<div class="ln" style="top:311.85px">12</div>
<div class="cl" style="top:311.85px">}</div>
<div class="ln" style="top:340.20px">13</div>
<div class="ln" style="top:368.55px">14</div>
<div class="cl" style="top:368.55px"><span class="k">void</span> <span class="t">Screen1View</span>::<span class="f">tearDownScreen</span>()</div>
<div class="ln" style="top:396.90px">15</div>
<div class="cl" style="top:396.90px">{</div>
<div class="ln" style="top:425.25px">16</div>
<div class="cl" style="top:425.25px">    <span class="t">Screen1ViewBase</span>::<span class="f">tearDownScreen</span>();</div>
<div class="ln" style="top:453.60px">17</div>
<div class="cl" style="top:453.60px">}</div>
<div class="ln" style="top:481.95px">18</div>
<div class="ln" style="top:510.30px">19</div>
<div class="cl" style="top:510.30px"><span class="c">//<span class="cj">更新其余项目，每当滑轮滚动会调用</span></span></div>
<div class="ln" style="top:538.65px">20</div>
<div class="cl" style="top:538.65px"><span class="k">void</span> <span class="t">Screen1View</span>::<span class="f">scrollWheel1UpdateItem</span>(<span class="t">CustomContainer1</span> &amp; <span class="p">item</span>, <span class="t">int16_t</span> <span class="p">itemIndex</span>)</div>
<div class="ln" style="top:567.00px">21</div>
<div class="cl" style="top:567.00px">{</div>
<div class="ln" style="top:595.35px">22</div>
<div class="cl" style="top:595.35px">    <span class="c">//<span class="cj">将</span>itemIndex<span class="cj">索引设置为</span>text<span class="cj">那就是从</span>0-max<span class="cj">显示</span></span></div>
<div class="ln" style="top:623.70px">23</div>
<div class="cl" style="top:623.70px">    <span class="p">item</span>.<span class="f">setText</span>(<span class="p">itemIndex</span>);</div>
<div class="ln" style="top:652.05px">24</div>
<div class="cl" style="top:652.05px">}</div>
</div>
<!-- editor scrollbars -->
<div class="abs sb" style="left:1856px;top:90px;width:25px;height:697px"></div>
<div class="abs" style="left:1856px;top:90px;width:24px;height:21px;background:#f3f5fb;border:1px solid #d6dbe9"></div>
<svg style="left:1861px;top:93px" width="14" height="16" viewBox="0 0 14 16"><path d="M0 6.5H14M0 9.5H14" stroke="#1e2a42" stroke-width="1.3"/><path d="M7 1V6M7 10V15" stroke="#1e2a42" stroke-width="1.3"/><path d="M4 4L7 0.5L10 4ZM4 12L7 15.5L10 12Z" fill="#1e2a42"/></svg>
<div class="abs tri" style="left:1863px;top:118px;border-left:5.500px solid transparent;border-right:5.500px solid transparent;border-bottom:7px solid #8b90a0"></div>
<div class="abs thumb" style="left:1861px;top:132px;width:15px;height:228px"></div>
<div class="abs" style="left:1856px;top:200px;width:24px;height:2px;background:#0b0bc4"></div>
<div class="abs tri" style="left:1863px;top:752px;border-left:5.500px solid transparent;border-right:5.500px solid transparent;border-top:7px solid #8b90a0"></div>
<div class="abs sb" style="left:489px;top:766px;width:1392px;height:21px"></div>
<div class="abs" style="left:490px;top:767px;width:74px;height:20px;background:#fcfcfc;border:1px solid #dcdfe8;line-height:18px;padding-left:1px;letter-spacing:-0.9px">81 %</div>
<div class="abs dd s" style="left:553px;top:775px"></div>
<div class="abs tri" style="left:572px;top:770px;border-top:6px solid transparent;border-bottom:6px solid transparent;border-right:7px solid #8b90a0"></div>
<div class="abs thumb" style="left:586px;top:771px;width:1136px;height:11px"></div>
<div class="abs tri" style="left:1843px;top:770px;border-top:6px solid transparent;border-bottom:6px solid transparent;border-left:6px solid #8b90a0"></div>
<!-- quick info tooltip -->
<div id="tip" class="abs">int16_t touchgfx::ScrollBase::getNumberOfItems() const
<span style="letter-spacing:-0.115px"> * Gets number of items in the DrawableList, as previously set using setNumberOfItems().</span>
 * @return The number of items.
 * @see setNumberOfItems, DrawableList::getNumberOfItems</div>
<!--/EDITOR-->
<!--OUTPUT-->
<!-- Output tool window -->

<div class="abs twtitle" style="left:40px;top:796px;width:1841px;height:28px"><span class="z">输出</span></div>
<div class="abs dd" style="left:1818px;top:807px;border-top-color:#d3d9e6;border-left-width:5px;border-right-width:5px;border-top-width:5px"></div>
<svg style="left:1837px;top:803px" width="12" height="14" viewBox="0 0 12 14"><path d="M3.200 1.200h6M3.800 1.200v6.800M1.200 8h10M6.200 8.500v5.500" fill="none" stroke="#e0e4ec" stroke-width="1.4"/><path d="M8.100 1.200v6.800" stroke="#e0e4ec" stroke-width="2.400"/></svg>
<svg style="left:1859px;top:804px" width="12" height="11" viewBox="0 0 12 11"><path d="M0.800 1L11.200 10.500M11.200 1L0.800 10.500" fill="none" stroke="#e0e4ec" stroke-width="2"/></svg>
<div class="abs twbar" style="left:41px;top:824px;width:1840px;height:26px"></div>
<div class="abs" style="left:50px;top:829px;line-height:24px;white-space:nowrap"><span class="z">显示输出来源</span>(S):</div>
<div class="abs" style="left:172px;top:828px;width:374px;height:24px;background:#fcfcfc;border:1px solid #e5e9f2"></div>
<div class="abs dd s" style="left:533px;top:837px"></div>
<div class="abs" style="left:554px;top:828px;width:1px;height:22px;background:#8e96a8"></div>
<svg style="left:564px;top:828px" width="20" height="22" viewBox="0 0 20 22"><path d="M10 5.500Q9 2.200 6 2.500Q2.800 3.200 3 8.500" fill="none" stroke="#b0b5c2" stroke-width="1.500"/><path d="M0.500 6.500L3 10L5.800 6.500" fill="none" stroke="#b0b5c2" stroke-width="1.500"/><path d="M7 11.200H18" stroke="#b0b5c2" stroke-width="1"/><path d="M4 15.500H11.500" stroke="#b0b5c2" stroke-width="3.200"/><path d="M4 19H16" stroke="#b0b5c2" stroke-width="1.300"/></svg>
<div class="abs" style="left:591px;top:828px;width:1px;height:22px;background:#8e96a8"></div>
<svg style="left:602px;top:828px" width="18" height="22" viewBox="0 0 18 22"><path d="M9 7.500H1.500M4.500 4.200L1.200 7.500L4.500 10.800" fill="none" stroke="#b0b5c2" stroke-width="1.600"/><path d="M10 10.500H15.500" stroke="#b0b5c2" stroke-width="1.200"/><path d="M3 13.300H15.500M3 16.500H15.500" stroke="#b0b5c2" stroke-width="1.800"/></svg>
<svg style="left:628px;top:828px" width="18" height="22" viewBox="0 0 18 22"><path d="M1.500 7.500H9M6 4.200L9.300 7.500L6 10.800" fill="none" stroke="#b0b5c2" stroke-width="1.600"/><path d="M10.500 10.500H16" stroke="#b0b5c2" stroke-width="1.200"/><path d="M4 13.300H16M4 16.500H16" stroke="#b0b5c2" stroke-width="1.800"/></svg>
<div class="abs" style="left:655px;top:828px;width:1px;height:22px;background:#8e96a8"></div>
<svg style="left:666px;top:828px" width="18" height="22" viewBox="0 0 18 22"><path d="M1.200 2.300L10.300 10.800M10.300 2.300L1.200 10.800" stroke="#b0b5c2" stroke-width="1.300"/><path d="M11.500 4H16.800M11.500 7.600H16.800" stroke="#b0b5c2" stroke-width="1.800"/><path d="M2 13.400H16.800M2 18.600H16.800" stroke="#b0b5c2" stroke-width="2.200"/></svg>
<div class="abs" style="left:692px;top:828px;width:1px;height:22px;background:#8e96a8"></div>
<svg style="left:701px;top:828px" width="22" height="22" viewBox="0 0 22 22"><text x="0.500" y="9.800" font-family="DejaVu Sans, Liberation Sans, sans-serif" font-size="7.800" font-weight="bold" letter-spacing="-0.300" fill="#2d2d2d">ab</text><text x="1" y="16.800" font-family="DejaVu Sans, Liberation Sans, sans-serif" font-size="7.800" font-weight="bold" fill="#2d2d2d">c</text><path d="M12 6.300H17.700V14.300H9.500" fill="none" stroke="#2d2d2d" stroke-width="2.200"/><path d="M13 10.800L8.300 14.300L13 17.800z" fill="#2d2d2d"/></svg>
<!-- floating progress ring (partially visible) -->
<svg style="left:0;top:0" width="1920" height="850" viewBox="0 0 1920 850"><circle cx="1559" cy="879" r="50" fill="#8f9ab8" opacity="0.05"/><circle cx="1559" cy="879" r="45" fill="#8f9ab8" opacity="0.07"/><circle cx="1559" cy="879" r="38.7" fill="#e2f6e5" stroke="#e6e8f0" stroke-width="4.8"/><path d="M1559 840.3A38.7 38.7 0 0 1 1597.1 885.7" fill="none" stroke="#50e971" stroke-width="4.8"/><circle cx="1559" cy="879" r="35.5" fill="none" stroke="#43d862" stroke-width="1.6"/></svg>
<!--/OUTPUT-->
<!--RIGHTSTRIP-->
<!-- auto-hide strip (right) -->
<div class="abs sidebar" style="left:1912px;top:36px;height:30px"></div>
<div class="abs" style="left:1905px;top:36px;transform:rotate(90deg);transform-origin:0 0;font-size:14.700px;line-height:16px;color:#fff;white-space:nowrap">通知</div>
<!--/RIGHTSTRIP-->
</body>
</html>
